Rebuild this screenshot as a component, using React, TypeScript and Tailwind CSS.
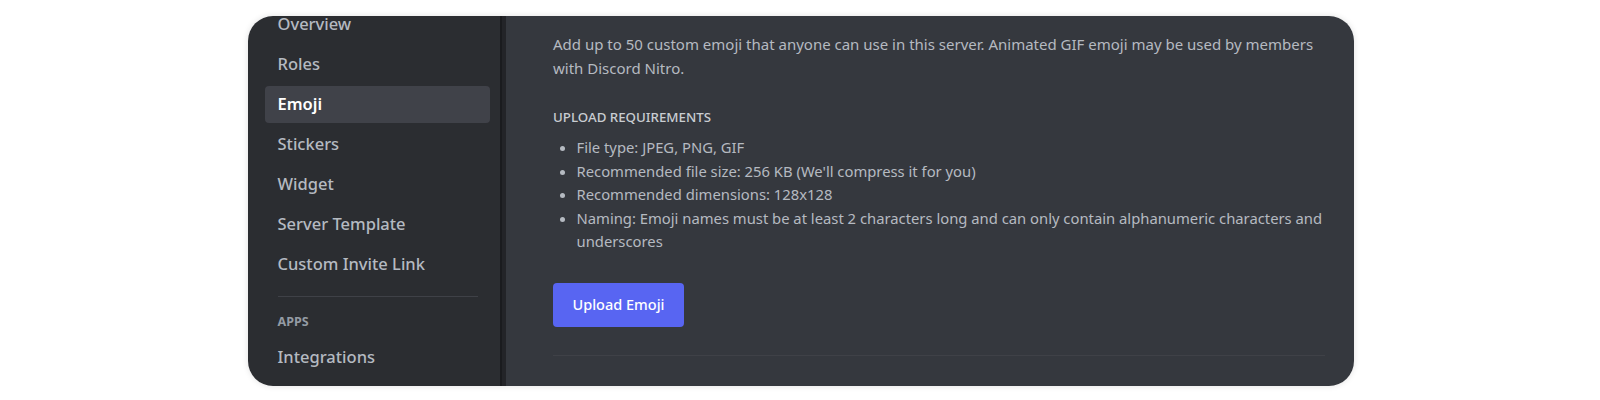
import React from "react";

const items = ["Overview", "Roles", "Emoji", "Stickers", "Widget", "Server Template", "Custom Invite Link"];

export default function App() {
  return (
    <div
      className="w-[1600px] h-[400px] bg-white flex items-start pl-[248px] pt-[16px]"
      style={{ fontFamily: '"Noto Sans", "Open Sans", sans-serif' }}
    >
      <div className="w-[1106px] h-[370px] rounded-[25px] overflow-hidden flex shadow-[0_0_6px_rgba(0,0,0,0.12)]">
        <div className="w-[252px] shrink-0 bg-[#2b2d31] pl-[17px] pr-[10px] overflow-hidden">
          <div className="-mt-[10px] flex flex-col gap-[3px]">
            {items.map((t) => (
              <div
                key={t}
                className={
                  "h-[37px] shrink-0 flex items-center px-[12.5px] rounded-[4px] text-[16.5px] font-medium whitespace-nowrap " +
                  (t === "Emoji" ? "bg-[#404249] text-white font-semibold" : "text-[#b5bac1]")
                }
              >
                {t}
              </div>
            ))}
          </div>
          <div className="mx-[12.5px] mt-[13px] h-px bg-[#3f4147]" />
          <div className="px-[12.5px] mt-[17px] h-[16px] flex items-center text-[12.5px] font-bold text-[#949ba4] uppercase">
            Apps
          </div>
          <div className="mt-[8.5px] h-[37px] flex items-center px-[12.5px] text-[16.5px] font-medium text-[#b5bac1]">
            Integrations
          </div>
        </div>
        <div className="w-[2px] shrink-0 bg-[#1a1b1e]" />
        <div className="w-[4px] shrink-0 bg-[#232428]" />
        <div className="flex-1 bg-[#35383e] pl-[47px] pr-[29px] pt-[17px] overflow-hidden">
          <p className="text-[15px] leading-[23.5px] text-[#b5bac1]">
            Add up to 50 custom emoji that anyone can use in this server. Animated GIF emoji may be used by members with Discord Nitro.
          </p>
          <div className="mt-[30px] h-[16px] flex items-center text-[13.3px] font-medium text-[#c9cdd2] uppercase">
            Upload Requirements
          </div>
          <ul className="mt-[10px] list-disc pl-[23.5px] text-[14.8px] leading-[23.5px] text-[#b5bac1] marker:text-[#b5bac1]">
            <li>File type: JPEG, PNG, GIF</li>
            <li>Recommended file size: 256 KB (We'll compress it for you)</li>
            <li>Recommended dimensions: 128x128</li>
            <li>Naming: Emoji names must be at least 2 characters long and can only contain alphanumeric characters and underscores</li>
          </ul>
          <button className="mt-[29px] w-[131px] h-[44px] rounded-[4px] bg-[#5865f2] text-white text-[14.5px] font-medium">
            Upload Emoji
          </button>
          <div className="mt-[28.5px] h-px bg-[#3f4147]" />
        </div>
      </div>
    </div>
  );
}
